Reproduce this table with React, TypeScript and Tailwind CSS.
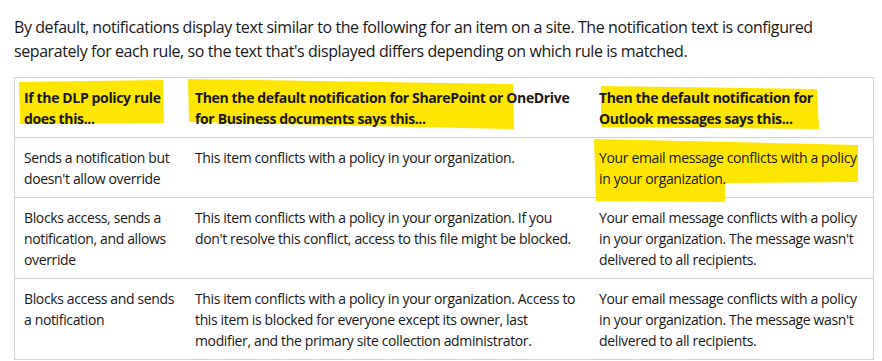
import React from "react";

const font = { fontFamily: '"Segoe UI", "Open Sans", "Noto Sans", sans-serif' };

function Cell({ lines, bold }: { lines: string[]; bold?: boolean }) {
  return (
    <div className={`px-[9px] pt-[9px] pb-[8px] text-[14px] leading-[21px] tracking-[-0.36px] ${bold ? "font-bold" : ""}`}>
      {lines.map((l, i) => (
        <div key={i} className="whitespace-nowrap">
          {l}
        </div>
      ))}
    </div>
  );
}

const rows: string[][][] = [
  [
    ["Sends a notification but", "doesn't allow override"],
    ["This item conflicts with a policy in your organization."],
    ["Your email message conflicts with a policy", "in your organization."],
  ],
  [
    ["Blocks access, sends a", "notification, and allows", "override"],
    [
      "This item conflicts with a policy in your organization. If you",
      "don't resolve this conflict, access to this file might be blocked.",
    ],
    ["Your email message conflicts with a policy", "in your organization. The message wasn't", "delivered to all recipients."],
  ],
  [
    ["Blocks access and sends", "a notification"],
    [
      "This item conflicts with a policy in your organization. Access to",
      "this item is blocked for everyone except its owner, last",
      "modifier, and the primary site collection administrator.",
    ],
    ["Your email message conflicts with a policy", "in your organization. The message wasn't", "delivered to all recipients."],
  ],
];

export default function App() {
  return (
    <div className="w-[882px] h-[361px] bg-white text-[#171717] overflow-hidden" style={font}>
      <p className="pl-[14px] pt-[15px] text-[16px] leading-[24px] tracking-[-0.42px]">
        By default, notifications display text similar to the following for an item on a site. The notification text is configured
        <br />
        separately for each rule, so the text that's displayed differs depending on which rule is matched.
      </p>
      <div className="relative ml-[14px] mt-[14px] w-[860px] border border-[#d2d2d2]">
        <svg className="absolute left-0 top-0 pointer-events-none" width="860" height="300" viewBox="14 79 860 300">
          <polygon points="18,83 162,81 163,124 19,125" fill="#ffe600" />
          <polygon points="187,80 512,85 513,130 188,123" fill="#ffe600" />
          <polygon points="600,87 816,90 818,130 600,128" fill="#ffe600" />
          <polygon points="593,140 857,146 857,183 724,184 724,203 595,202" fill="#ffe600" />
        </svg>
        <div className="relative grid grid-cols-[171px_404px_283px]">
          <div className="contents">
            <Cell bold lines={["If the DLP policy rule", "does this..."]} />
            <Cell bold lines={["Then the default notification for SharePoint or OneDrive", "for Business documents says this..."]} />
            <Cell bold lines={["Then the default notification for", "Outlook messages says this..."]} />
          </div>
          {rows.map((r, i) => (
            <div key={i} className="contents">
              {r.map((c, j) => (
                <div key={j} className="border-t border-[#d2d2d2]">
                  <Cell lines={c} />
                </div>
              ))}
            </div>
          ))}
        </div>
      </div>
    </div>
  );
}
